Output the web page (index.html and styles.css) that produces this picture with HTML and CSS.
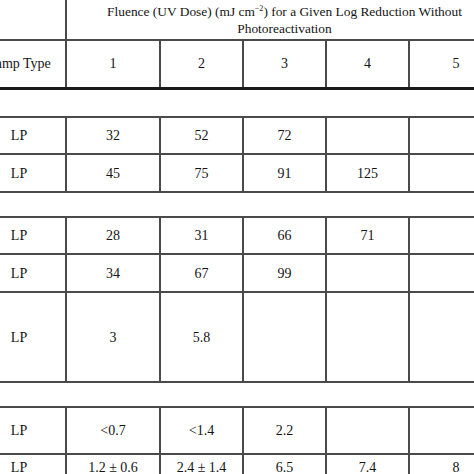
FILE: index.html
```html
<!DOCTYPE html>
<html>
<head>
<meta charset="utf-8">
<link rel="stylesheet" href="styles.css">
</head>
<body>
<div class="page">
<table class="uv">
  <colgroup>
    <col class="c-lamp"><col class="c-wide"><col class="c-mid"><col class="c-mid"><col class="c-mid"><col class="c-wide">
  </colgroup>
  <thead>
    <tr class="h1">
      <th class="lamp-top"></th>
      <th colspan="5" class="fluence">Fluence (UV Dose) (mJ cm<sup>−2</sup>) for a Given Log Reduction Without<br>Photoreactivation</th>
    </tr>
    <tr class="h2">
      <th>Lamp Type</th><th>1</th><th>2</th><th>3</th><th>4</th><th>5</th>
    </tr>
  </thead>
  <tbody>
    <tr class="band b1"><td colspan="6"></td></tr>
    <tr class="r37"><td>LP</td><td>32</td><td>52</td><td>72</td><td></td><td></td></tr>
    <tr class="r38"><td>LP</td><td>45</td><td>75</td><td>91</td><td>125</td><td></td></tr>
    <tr class="band"><td colspan="6"></td></tr>
    <tr class="r37"><td>LP</td><td>28</td><td>31</td><td>66</td><td>71</td><td></td></tr>
    <tr class="r38"><td>LP</td><td>34</td><td>67</td><td>99</td><td></td><td></td></tr>
    <tr class="r90"><td>LP</td><td>3</td><td>5.8</td><td></td><td></td><td></td></tr>
    <tr class="band"><td colspan="6"></td></tr>
    <tr class="r47"><td>LP</td><td>&lt;0.7</td><td>&lt;1.4</td><td>2.2</td><td></td><td></td></tr>
    <tr class="rlast"><td>LP</td><td>1.2 ± 0.6</td><td>2.4 ± 1.4</td><td>6.5</td><td>7.4</td><td>8</td></tr>
  </tbody>
</table>
</div>
</body>
</html>
```

FILE: styles.css
```css
html, body {
  margin: 0;
  padding: 0;
  background: #ffffff;
}
body {
  width: 474px;
  height: 474px;
  overflow: hidden;
}
.page {
  width: 474px;
  height: 474px;
  overflow: hidden;
}
.uv {
  border-collapse: collapse;
  table-layout: fixed;
  width: 531px;
  margin-left: -29px;
  margin-top: -2px;
  color: #141414;
}
.c-lamp { width: 94px; }
.c-wide { width: 94px; }
.c-mid { width: 83px; }
.uv th, .uv td {
  font-family: "Liberation Serif", "Times New Roman", serif;
  font-size: 14px;
  border: 2px solid #4a4a4a;
  padding: 0;
  text-align: center;
  vertical-align: middle;
  font-weight: normal;
  line-height: 17px;
}
.h1 { height: 41px; }
.h1 .lamp-top { border-bottom: none; }
.uv .fluence { font-size: 13.4px; }
.fluence sup { font-size: 8px; vertical-align: 5px; line-height: 0; }
.h2 { height: 48px; }
.h2 th { border-bottom: 3px solid #1a1a1a; }
.band { height: 25px; }
.band.b1 { height: 29px; }
.band td { border-left: none; border-right: none; }
.r37 { height: 37px; }
.r38 { height: 38px; }
.r47 { height: 47px; }
.r90 { height: 90px; }
.rlast { height: 27px; }
```
